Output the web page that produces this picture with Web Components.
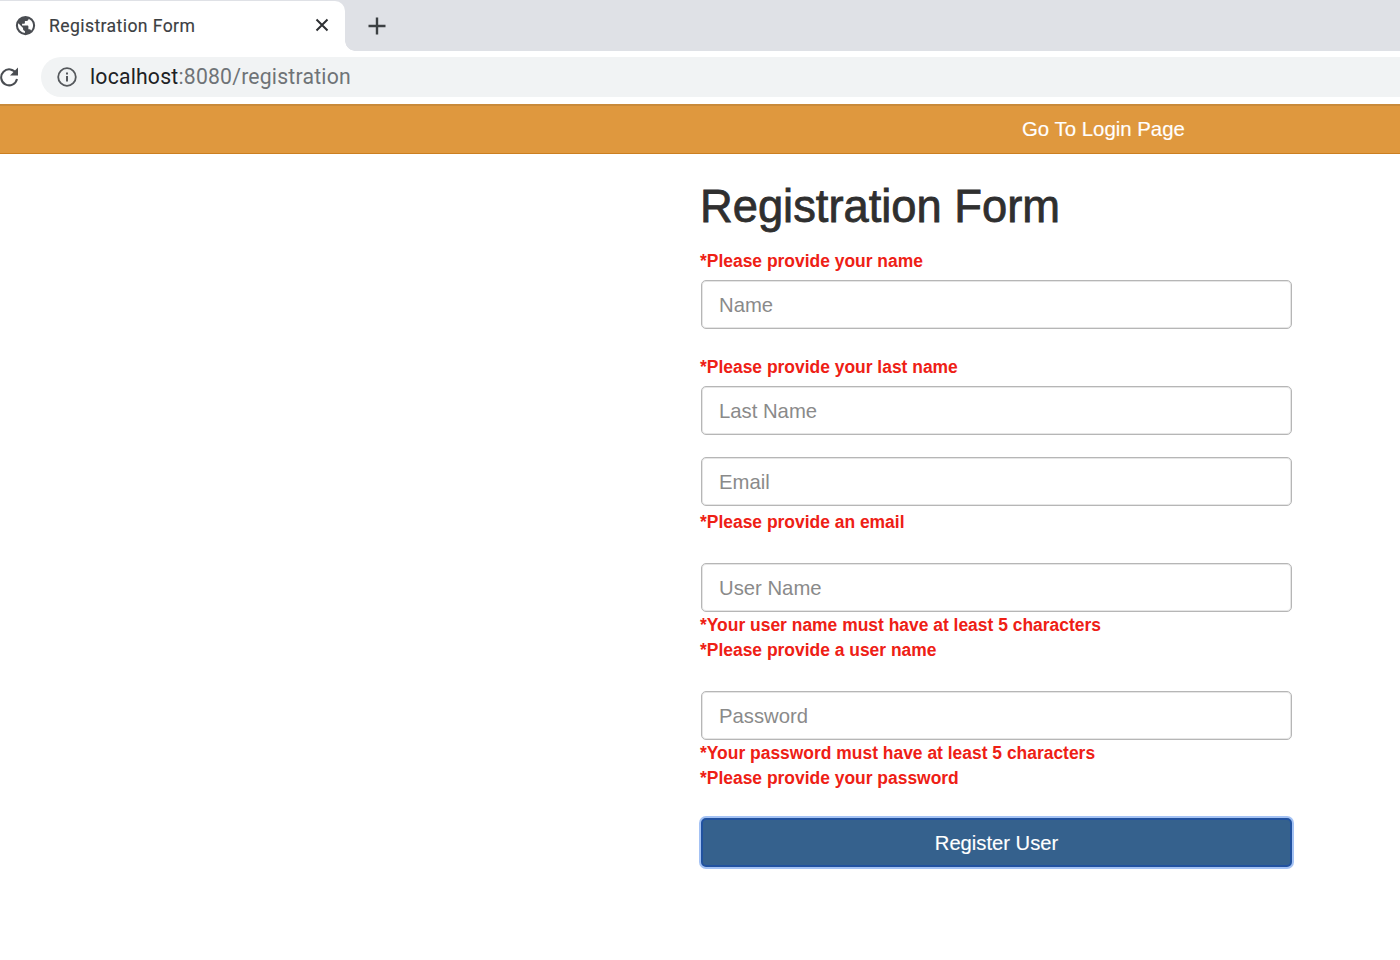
<!DOCTYPE html>
<html lang="en"><head><meta charset="utf-8"><title>Registration Form</title>
<style>html,body{margin:0;padding:0;background:#fff;overflow:hidden}body{font-family:"Liberation Sans",Arial,sans-serif;height:960px}</style></head>
<body>
<browser-chrome></browser-chrome>
<nav-bar>Go To Login Page</nav-bar>
<main-page>
  <reg-form>
    <form-title>Registration Form</form-title>
    <form-field placeholder="Name" style="margin-top:11px"><error-line slot="before">*Please provide your name</error-line></form-field>
    <form-field placeholder="Last Name" style="margin-top:25px"><error-line slot="before">*Please provide your last name</error-line></form-field>
    <form-field placeholder="Email" style="margin-top:22px"><error-line slot="after" style="margin-top:3px">*Please provide an email</error-line></form-field>
    <form-field placeholder="User Name" style="margin-top:29px"><error-line slot="after">*Your user name must have at least 5 characters</error-line><error-line slot="after">*Please provide a user name</error-line></form-field>
    <form-field placeholder="Password" style="margin-top:29px"><error-line slot="after">*Your password must have at least 5 characters</error-line><error-line slot="after">*Please provide your password</error-line></form-field>
    <submit-button style="margin-top:28px">Register User</submit-button>
  </reg-form>
</main-page>
<script>
function def(name,html){customElements.define(name,class extends HTMLElement{constructor(){super();this.attachShadow({mode:'open'}).innerHTML=typeof html==='function'?html(this):html}})}
def('browser-chrome',`<style>
:host{display:block;font-family:"Roboto","Liberation Sans",sans-serif}
.strip{height:51px;background:#dfe1e6;display:flex;align-items:flex-end}
.tab{width:345px;height:50px;background:#fff;border-radius:0 10px 0 0;display:flex;align-items:center;box-sizing:border-box;padding:0 0 2px 15px;color:#3c4043;font-size:17.6px;letter-spacing:.4px;position:relative;-webkit-text-stroke:.15px #3c4043}
.tab::after{content:"";position:absolute;right:-10px;bottom:0;width:10px;height:10px;background:radial-gradient(circle at 100% 0,#dfe1e6 9.500px,#fff 10px)}
.tab span{margin-left:13px;flex:1;white-space:nowrap;padding-top:2px}
.x{margin-right:16px}.plus{margin-left:23px;align-self:center}
.bar{height:53px;background:#fff;display:flex;align-items:center;box-sizing:border-box;padding-bottom:1px}
.reload{margin-left:-1px;width:42px;flex:none}
.omni{flex:1;height:40px;background:#f1f3f4;border-radius:20px 0 0 20px;display:flex;align-items:center;padding-left:16px;font-size:21.2px;letter-spacing:.2px;white-space:nowrap;color:#202124}
.omni b{font-weight:400;color:#6f7377}.omni svg{margin-right:13px}.omni span{padding-bottom:2px}
</style>
<div class="strip"><div class="tab">
<svg width="21" height="21" viewBox="0 0 24 24"><path fill="#4a4d52" fill-rule="evenodd" d="M12 1a11 11 0 1 0 0 22 11 11 0 0 0 0-22zM3.400 12c0-.9.1-1.700.4-2.500l5.400 5.400v1.200c0 1.200 1 2.100 2.100 2.100v2.300A8.600 8.600 0 0 1 3.400 12zm15 5.900a2.100 2.100 0 0 0-2-1.500h-1.100v-3.200c0-.6-.5-1.100-1.100-1.100H8.100v-2.100h2.100c.6 0 1.100-.5 1.100-1.100V6.800h2.100c1.200 0 2.100-.9 2.100-2.100v-.5a8.600 8.600 0 0 1 2.800 13.700z"/></svg>
<span>Registration Form</span>
<svg class="x" width="14" height="14" viewBox="0 0 14 14"><path d="M1.500 1.500l11 11M12.500 1.500l-11 11" stroke="#2e3033" stroke-width="2" fill="none"/></svg>
</div>
<svg class="plus" width="18" height="18" viewBox="0 0 18 18"><path d="M9 .5v17M.5 9h17" stroke="#3c4043" stroke-width="2.400" fill="none"/></svg>
</div>
<div class="bar">
<svg class="reload" width="42" height="24" viewBox="0 0 42 24"><g fill="none" stroke="#4a4d52" stroke-width="2"><path d="M17.200 8.500A8 8 0 1 0 18 14"/></g><path fill="#4a4d52" d="M19 2.500v8h-8z"/></svg>
<div class="omni"><svg width="20" height="20" viewBox="0 0 20 20"><circle cx="10" cy="10" r="8.800" fill="none" stroke="#55585c" stroke-width="1.800"/><rect x="9" y="9" width="2" height="5.500" fill="#55585c"/><rect x="9" y="5.500" width="2" height="2" fill="#55585c"/></svg><span>localhost<b>:8080/registration</b></span></div>
</div>`);
def('nav-bar',`<style>
:host{display:flex;align-items:center;box-sizing:border-box;height:50px;background:#df983e;border-top:2px solid #c98a3a;border-bottom:1px solid #cc7f20;padding:0 0 2px 1022px;color:#fff;font-size:20.400px;line-height:24px;-webkit-text-stroke:.15px #fff}
</style><slot></slot>`);
def('main-page',`<style>:host{display:block;padding:23px 108px 0 701px;color:#333}</style><slot></slot>`);
def('reg-form',`<style>:host{display:flex;flex-direction:column}</style><slot></slot>`);
def('form-title',`<style>:host{display:block;margin-left:-1px;font-size:45.300px;font-weight:400;line-height:60px;color:#2f2f2f;white-space:nowrap;-webkit-text-stroke:.8px #2f2f2f}</style><slot></slot>`);
def('error-line',`<style>:host{display:block;color:#ee2015;font-weight:700;font-size:17.450px;line-height:23px;padding-top:2px;margin-left:-1px;white-space:nowrap}</style><slot></slot>`);
def('form-field',f=>`<style>
:host{display:flex;flex-direction:column}
slot[name=before]::slotted(*){margin-bottom:7px}
input{display:block;box-sizing:border-box;width:100%;height:49px;border:1px solid #b6b6b6;box-shadow:inset 0 0 0 1px #e6e6e6;border-radius:5px;padding:1px 17px 0;font:20.300px "Liberation Sans",Arial,sans-serif;color:#555;background:#fff;outline:none;margin:0}
input::placeholder{color:#8a8a8a;opacity:1}
</style><slot name="before"></slot><input placeholder="${f.getAttribute('placeholder')||''}"><slot name="after"></slot>`);
def('submit-button',`<style>
:host{display:block}
button{display:block;width:100%;height:49px;box-sizing:border-box;background:#35618d;color:#fff;font:20.200px/24px "Liberation Sans",Arial,sans-serif;-webkit-text-stroke:.15px #fff;border:2px solid #2152a0;border-radius:5px;box-shadow:0 0 0 2px #a4c2f4;padding:0}
</style><button><slot></slot></button>`);
</script>
</body></html>
